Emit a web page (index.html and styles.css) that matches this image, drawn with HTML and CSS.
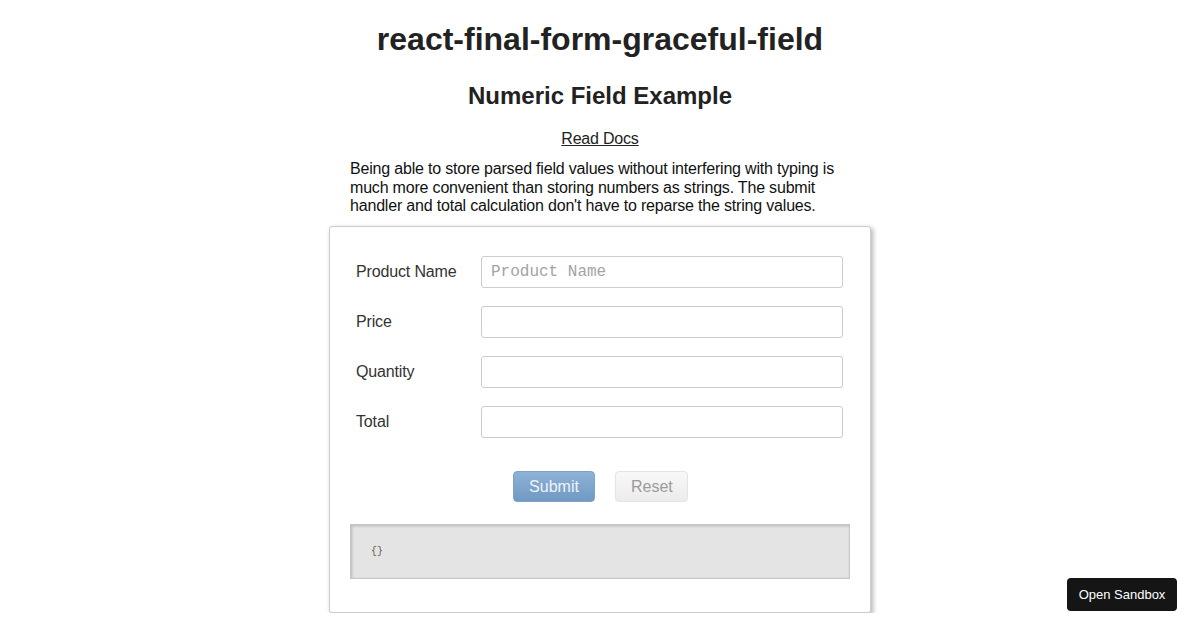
FILE: index.html
```
<!DOCTYPE html>
<html>
<head>
<meta charset="utf-8">
<link rel="stylesheet" href="styles.css">
</head>
<body>
<div class="page">
  <h1 class="title">react-final-form-graceful-field</h1>
  <h2 class="subtitle">Numeric Field Example</h2>
  <a class="docs" href="#">Read Docs</a>
  <p class="intro">Being able to store parsed field values without interfering with typing is much more convenient than storing numbers as strings. The submit handler and total calculation don't have to reparse the string values.</p>
  <form class="form">
    <div class="row">
      <label class="label">Product Name</label>
      <input class="input" type="text" placeholder="Product Name">
    </div>
    <div class="row">
      <label class="label">Price</label>
      <input class="input" type="text">
    </div>
    <div class="row">
      <label class="label">Quantity</label>
      <input class="input" type="text">
    </div>
    <div class="row">
      <label class="label">Total</label>
      <input class="input" type="text">
    </div>
    <div class="buttons">
      <button class="btn btn-submit" type="submit" disabled>Submit</button>
      <button class="btn btn-reset" type="button" disabled>Reset</button>
    </div>
    <pre class="values">{}</pre>
  </form>
</div>
<a class="sandbox" href="#">Open Sandbox</a>
</body>
</html>
```
FILE: styles.css
```
html, body {
  margin: 0;
  padding: 0;
  background: #fff;
}
body {
  font-family: "Liberation Sans", Arial, sans-serif;
  color: #222;
}
.page {
  display: flex;
  flex-direction: column;
  align-items: center;
}
.title {
  margin: 21px 0 0;
  font-size: 32px;
  line-height: 37px;
  font-weight: bold;
  color: #222;
  text-align: center;
}
.subtitle {
  margin: 24px 0 0;
  font-size: 24px;
  line-height: 28px;
  font-weight: bold;
  color: #222;
  text-align: center;
}
.docs {
  display: block;
  margin-top: 20px;
  font-size: 16px;
  line-height: 18px;
  letter-spacing: -0.2px;
  color: #222;
  text-decoration: underline;
  text-align: center;
}
.intro {
  width: 500px;
  margin: 12px 0 0;
  font-size: 16px;
  line-height: 18.5px;
  letter-spacing: -0.19px;
  color: #111;
}
.form {
  width: 500px;
  margin-top: 10px;
  padding: 20px 20px 20px;
  border: 1px solid #ccc;
  border-radius: 3px;
  box-shadow: 2px 2px 5px rgba(0, 0, 0, 0.3);
  background: #fff;
}
.row {
  display: flex;
  align-items: center;
  height: 40px;
  margin: 5px 7px 10px 6px;
}
.label {
  width: 110px;
  font-size: 16px;
  line-height: 40px;
  letter-spacing: -0.15px;
  color: #333;
  padding-top: 1px;
}
.input {
  flex: 1;
  box-sizing: border-box;
  height: 32px;
  margin-left: 15px;
  padding: 3px 9px;
  border: 1px solid #ccc;
  border-radius: 3px;
  font-family: "Liberation Mono", "Courier New", monospace;
  font-size: 16px;
  color: #333;
  background: #fff;
  outline: none;
}
.input::placeholder {
  color: #a3a3a3;
}
.buttons {
  display: flex;
  justify-content: center;
  gap: 20px;
  margin-top: 29px;
  padding-left: 1px;
}
.btn {
  box-sizing: border-box;
  height: 31px;
  padding: 0 15px;
  border-radius: 4px;
  font-family: "Liberation Sans", Arial, sans-serif;
  font-size: 16px;
  line-height: 29px;
}
.btn-submit {
  width: 82px;
  color: #eef4fa;
  background: linear-gradient(to bottom, #8db2d6, #7199c2);
  border: 1px solid #7ea2c6;
}
.btn-reset {
  width: 73px;
  color: #9b9b9b;
  background: linear-gradient(to bottom, #f8f8f8, #ececec);
  border: 1px solid #e4e4e4;
}
.values {
  margin: 22px 0 13px;
  padding: 20px;
  height: 13px;
  border: 1px solid #c8c8c8;
  background: #e4e4e4;
  box-shadow: inset 1px 1px 3px rgba(0, 0, 0, 0.2);
  font-family: "Liberation Mono", "Courier New", monospace;
  font-size: 10px;
  line-height: 13px;
  color: #6b5a48;
}
.sandbox {
  position: fixed;
  right: 23px;
  bottom: 19px;
  width: 110px;
  height: 33px;
  box-sizing: border-box;
  border-radius: 4px;
  background: #151515;
  color: #fff;
  font-family: "Liberation Sans", Arial, sans-serif;
  font-size: 13px;
  line-height: 33px;
  text-align: center;
  text-decoration: none;
}
```
